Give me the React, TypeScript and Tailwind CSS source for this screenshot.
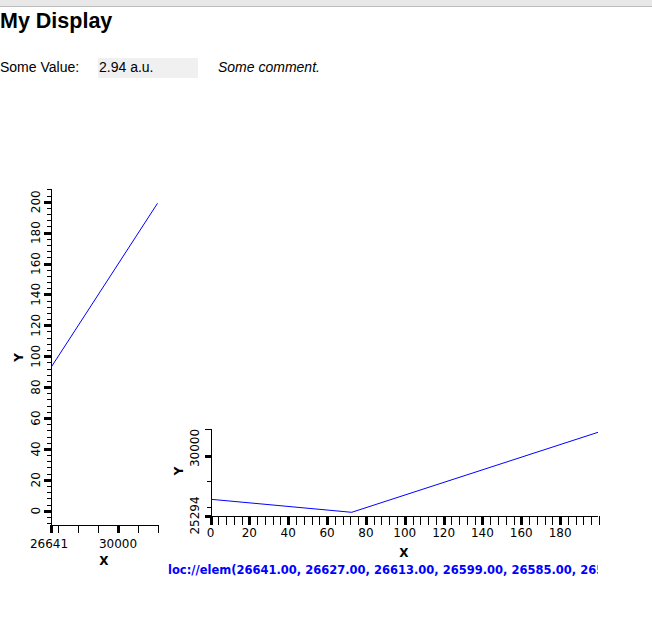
const BLUE = '#0000ff';

// chart 1 (left): y axis 0..200, x axis 26641..30000
const c1Unit = 1.545;
const c1Zero = 510.7;
const c1Ticks: number[] = [];
for (let v = -8; v <= 208; v += 4) c1Ticks.push(v);
const c1XTicks = [
  { x: 51, major: true },
  { x: 58, major: false },
  { x: 78, major: false },
  { x: 98, major: false },
  { x: 118, major: true },
  { x: 138, major: false },
  { x: 157.5, major: false },
];

// chart 2 (right): x axis 0..200
const c2Unit = 1.9425;
const c2Zero = 210.5;
const c2Ticks: number[] = [];
for (let v = 0; v <= 200; v += 4) c2Ticks.push(v);

function LeftChart() {
  return (
    <svg
      width={165}
      height={390}
      viewBox="0 180 165 390"
      className="block shrink-0 font-['DejaVu_Sans',sans-serif]"
    >
      <g shapeRendering="crispEdges" fill="#000" stroke="#000">
        <line x1={51.5} y1={189} x2={51.5} y2={526} strokeWidth={1} />
        <line x1={51} y1={525.5} x2={158} y2={525.5} strokeWidth={1} />
        {c1Ticks.map((v) => {
          const y = c1Zero - v * c1Unit;
          return v % 20 === 0 ? (
            <rect key={v} x={44} y={Math.round(y) - 1} width={7} height={3} stroke="none" />
          ) : (
            <line key={v} x1={47} y1={Math.round(y) + 0.5} x2={51} y2={Math.round(y) + 0.5} strokeWidth={1} />
          );
        })}
        {c1XTicks.map((t) =>
          t.major ? (
            <rect key={t.x} x={t.x - 1} y={525} width={3} height={8} stroke="none" />
          ) : (
            <line key={t.x} x1={t.x + 0.5} y1={525} x2={t.x + 0.5} y2={533} strokeWidth={1} />
          )
        )}
      </g>
      <g fontSize={12} fill="#000">
        {c1Ticks
          .filter((v) => v >= 0 && v <= 200 && v % 20 === 0)
          .map((v) => {
            const y = c1Zero - v * c1Unit;
            return (
              <text key={v} transform={`translate(39.5 ${y}) rotate(-90)`} textAnchor="middle">
                {v}
              </text>
            );
          })}
        <text x={49} y={548.3} textAnchor="middle">26641</text>
        <text x={118} y={548.3} textAnchor="middle">30000</text>
      </g>
      <polyline points="51.5,366.7 157.5,203.3" fill="none" stroke={BLUE} strokeWidth={1} />
      <g fontSize={12} fontWeight="bold" fill="#000">
        <text x={104} y={564.5} textAnchor="middle">X</text>
        <text transform="translate(22.7 357.5) rotate(-90)" textAnchor="middle">Y</text>
      </g>
    </svg>
  );
}

function RightChart() {
  return (
    <svg
      width={435}
      height={142}
      viewBox="165 420 435 142"
      className="block font-['DejaVu_Sans',sans-serif]"
    >
      <g shapeRendering="crispEdges" fill="#000" stroke="#000">
        <line x1={211.5} y1={429} x2={211.5} y2={517} strokeWidth={1} />
        <line x1={211} y1={516.5} x2={598} y2={516.5} strokeWidth={1} />
        <line x1={205} y1={429.5} x2={212} y2={429.5} strokeWidth={1} />
        <rect x={205} y={455} width={7} height={3} stroke="none" />
        <line x1={206.5} y1={481.5} x2={212} y2={481.5} strokeWidth={1} />
        <line x1={206.5} y1={507.5} x2={212} y2={507.5} strokeWidth={1} />
        <rect x={205} y={515} width={7} height={3} stroke="none" />
        {c2Ticks.map((v) => {
          const x = Math.round(c2Zero + v * c2Unit);
          return v % 20 === 0 && v < 200 ? (
            <rect key={v} x={x - 1} y={516} width={3} height={9} stroke="none" />
          ) : (
            <line key={v} x1={x + 0.5} y1={516} x2={x + 0.5} y2={525} strokeWidth={1} />
          );
        })}
      </g>
      <g fontSize={12} fill="#000">
        <text transform="translate(199.3 448) rotate(-90)" textAnchor="middle">30000</text>
        <text transform="translate(199.3 515.5) rotate(-90)" textAnchor="middle">25294</text>
        {c2Ticks
          .filter((v) => v % 20 === 0 && v < 200)
          .map((v) => (
            <text key={v} x={c2Zero + v * c2Unit} y={537} textAnchor="middle">
              {v}
            </text>
          ))}
      </g>
      <polyline points="211,499.3 351.7,512.3 598,432.3" fill="none" stroke={BLUE} strokeWidth={1} />
      <g fontSize={12} fontWeight="bold" fill="#000">
        <text x={404} y={557} textAnchor="middle">X</text>
        <text transform="translate(182.7 471) rotate(-90)" textAnchor="middle">Y</text>
      </g>
    </svg>
  );
}

export default function App() {
  return (
    <div className="w-[652px] h-[619px] bg-white overflow-hidden font-['Liberation_Sans',Arial,sans-serif] text-black">
      {/* window strip */}
      <div className="h-[6px] bg-[#e8e8e8] border-b border-[#bdbdbd] box-content" />

      <h1 className="mt-[1px] text-[21.5px] leading-[26px] font-bold">My Display</h1>

      {/* value row */}
      <div className="mt-[24px] flex items-start text-[14px] leading-[18px]">
        <span className="w-[98px]">Some Value:</span>
        <div className="w-[100px] h-[20px] bg-[#f0f0f0] pl-[1px]">2.94 a.u.</div>
        <span className="ml-[20px] italic">Some comment.</span>
      </div>

      {/* plots */}
      <div className="flex items-start">
        <div className="mt-[102px]">
          <LeftChart />
        </div>
        <div className="mt-[342px] flex flex-col">
          <RightChart />
          <div className="ml-[3px] w-[430px] overflow-hidden whitespace-nowrap font-['DejaVu_Sans',sans-serif] font-bold text-[11.5px] leading-[16px] text-[#0000ff]">
            loc://elem(26641.00, 26627.00, 26613.00, 26599.00, 26585.00, 26571.00, 26557.00)
          </div>
        </div>
      </div>
    </div>
  );
}
